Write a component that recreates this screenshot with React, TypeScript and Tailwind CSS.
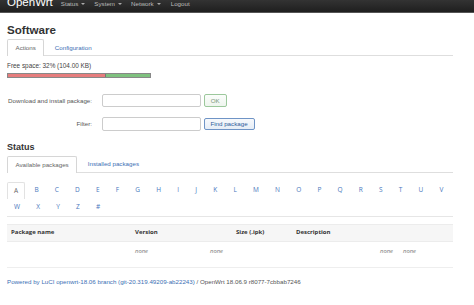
import React from 'react'

/* ---------- дані ---------- */
const NAV = ['Status', 'System', 'Network']
const LETTERS = [
  'A','B','C','D','E','F','G','H','I','J','K','L','M',
  'N','O','P','Q','R','S','T','U','V','W','X','Y','Z','#',
]

function Caret () {
  return (
    <span className="ml-[3px] inline-block border-x-[2px] border-t-[2.5px] border-x-transparent border-t-[#aaa] align-middle" />
  )
}

function Tabs ({ items }: { items: string[] }) {
  return (
    <ul className="flex border-b border-[#dedede]">
      {items.map((t, i) => (
        <li
          key={t}
          className={`-mb-px mr-[2px] flex h-[17px] items-center rounded-t-[2px] px-[7.5px]
            ${i === 0
              ? 'border border-b-0 border-[#d6d6d6] bg-white text-[#666]'
              : 'border border-transparent text-[#3c6fb4]'}`}
        >
          {t}
        </li>
      ))}
    </ul>
  )
}

export default function App () {
  return (
    <div className="min-h-[305px] bg-white font-['Liberation_Sans',Arial,sans-serif] text-[6.2px] text-[#555]">

      {/* верхня панель */}
      <header className="h-[13px] overflow-hidden border-b border-[#555] bg-gradient-to-b from-[#333] to-[#1f1f1f]">
        <div className="-mt-[5px] flex items-baseline pl-[7px]">
          <span className="text-[11.5px] leading-[14px] text-white">OpenWrt</span>
          <nav className="ml-[8px] flex items-baseline gap-[9px] text-[6.2px] text-[#bbb]">
            {NAV.map(n => (
              <span key={n}>{n}<Caret/></span>
            ))}
            <span className="ml-[1px]">Logout</span>
          </nav>
        </div>
      </header>

      <main className="pl-[7px] pr-[21px]">
        <h2 className="mt-[10px] text-[11.6px] leading-[14px] font-bold text-[#333]">Software</h2>

        <div className="mt-[2px]">
          <Tabs items={['Actions', 'Configuration']} />
        </div>

        {/* вільне місце */}
        <p className="mt-[6px] leading-[8px] text-[6.4px] text-[#444]">Free space: 32% (104.00 KB)</p>
        <div className="mt-[2.5px] flex h-[5.5px] w-[144px] border border-[#888]">
          <div className="w-[97px] bg-[#e67d7d]" />
          <div className="flex-1 border-l border-[#777] bg-[#7fc17f]" />
        </div>

        {/* форма */}
        <div className="mt-[16px] flex flex-col gap-[10px]">
          <div className="flex items-center">
            <label className="w-[85px] text-right text-[#555]">Download and install package:</label>
            <input className="ml-[10px] h-[13.3px] w-[99px] rounded-[2px] border border-[#ccc]" />
            <button className="ml-[2.5px] h-[12.7px] w-[23.5px] rounded-[2px] border border-[#9cc89c] bg-gradient-to-b from-[#fbfdfb] to-[#eef5ee] text-[6.2px] text-[#7a957a]">
              OK
            </button>
          </div>
          <div className="flex items-center">
            <label className="w-[85px] text-right text-[#555]">Filter:</label>
            <input className="ml-[10px] h-[13.3px] w-[99px] rounded-[2px] border border-[#ccc]" />
            <button className="ml-[2.5px] h-[12.5px] w-[51px] rounded-[2px] border border-[#6f94c6] bg-gradient-to-b from-[#f7f9fc] to-[#e6edf6] text-[6.2px] text-[#2f5c99]">
              Find package
            </button>
          </div>
        </div>

        <h3 className="mt-[11.5px] text-[9px] leading-[11px] font-bold text-[#333]">Status</h3>

        <div className="mt-[2.5px]">
          <Tabs items={['Available packages', 'Installed packages']} />
        </div>

        {/* літери */}
        <div className="mt-[9px] flex flex-wrap border-b border-[#e6e6e6] font-['Open_Sans',sans-serif] text-[6.5px]">
          {LETTERS.map((l, i) => (
            <span
              key={l}
              className={`mr-[2px] flex h-[17px] items-center px-[6.1px]
                ${i === 0
                  ? 'rounded-t-[2px] border border-b-0 border-[#e2e2e2] text-[#666]'
                  : 'border border-transparent text-[#4a77bd]'}`}
            >
              {l}
            </span>
          ))}
        </div>

        {/* таблиця */}
        <div className="mt-[7px] font-['Open_Sans',sans-serif]">
          <div className="flex h-[18px] items-center border-y border-[#ececec] bg-[#f6f6f6] text-[6px] font-bold text-[#333]">
            <span className="w-[128px] pl-[4px]">Package name</span>
            <span className="w-[101px]">Version</span>
            <span className="w-[60px]">Size (.ipk)</span>
            <span>Description</span>
          </div>
          <div className="flex h-[20px] items-center text-[5.9px] italic text-[#777]">
            <span className="w-[128px]" />
            <span className="w-[75px]">none</span>
            <span className="w-[170px]">none</span>
            <span className="w-[23px]">none</span>
            <span>none</span>
          </div>
          <div className="mt-[5.5px] border-t border-[#eee]" />
        </div>

        {/* футер */}
        <p className="mt-[9.5px] leading-[8px] text-[6.2px]">
          <span className="text-[#3c6fb4]">Powered by LuCI openwrt-18.06 branch (git-20.319.49209-ab22243)</span>
          <span className="text-[#555]"> / OpenWrt 18.06.9 r8077-7cbbab7246</span>
        </p>
      </main>
    </div>
  )
}
